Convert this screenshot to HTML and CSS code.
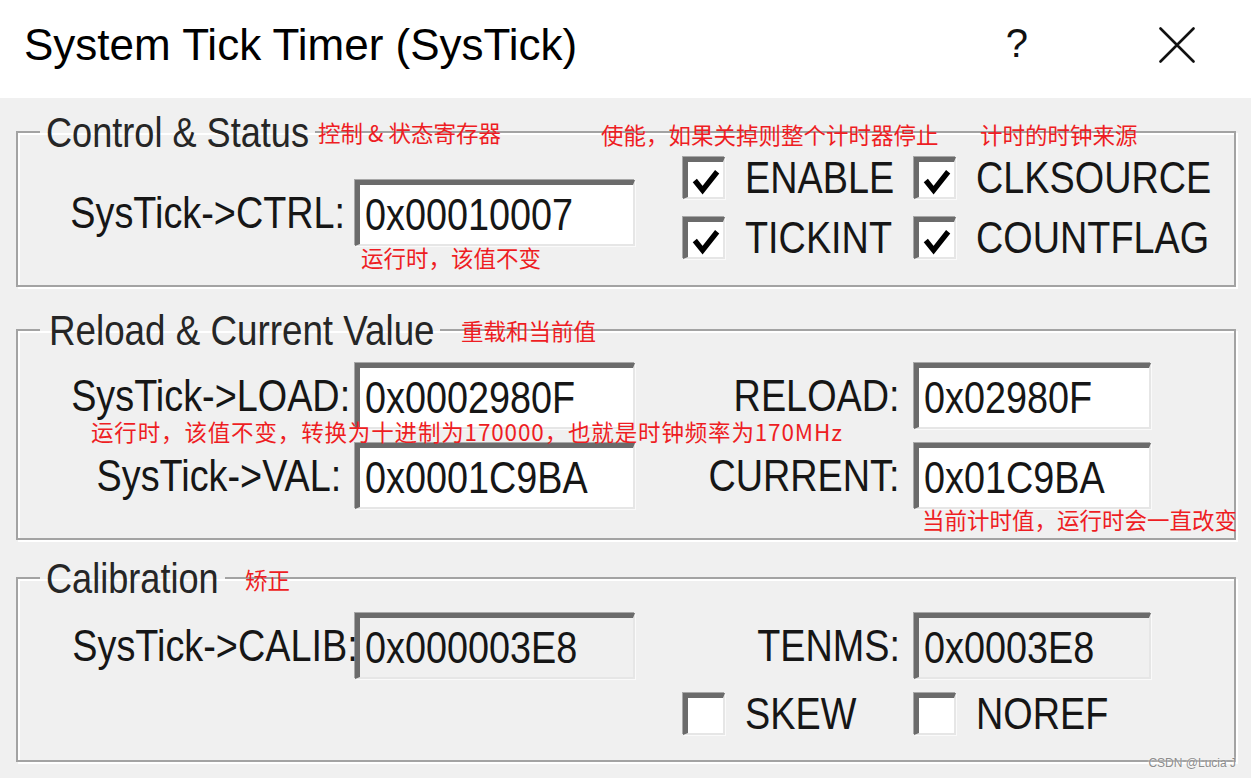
FILE: index.html
```html
<!DOCTYPE html>
<html lang="en">
<head>
<meta charset="utf-8">
<title>System Tick Timer (SysTick)</title>
<link rel="stylesheet" href="styles.css">
</head>
<body>
<div class="dialog">
  <header class="titlebar">
    <h1 class="title">System Tick Timer (SysTick)</h1>
    <div class="title-buttons">
      <span class="help">?</span>
      <svg class="close" width="36" height="36" viewBox="0 0 36 36"><path d="M1.5 1.5 L34.5 34.5 M34.5 1.5 L1.5 34.5"/></svg>
    </div>
  </header>

  <main class="content">
    <fieldset class="group g-ctrl">
      <legend><span class="nw lg-ctrl">Control &amp; Status</span></legend>
      <div class="ctrl-layout">
        <div class="field">
          <span class="lbl"><span class="nw r">SysTick-&gt;CTRL:</span></span>
          <div class="edit"><span class="nw">0x00010007</span></div>
        </div>
        <div class="checks">
          <div class="chk"><span class="box"><svg viewBox="0 0 36 36"><path d="M7 19 L15 29 L30 10"/></svg></span><span class="chk-lbl"><span class="nw">ENABLE</span></span></div>
          <div class="chk"><span class="box"><svg viewBox="0 0 36 36"><path d="M7 19 L15 29 L30 10"/></svg></span><span class="chk-lbl"><span class="nw">CLKSOURCE</span></span></div>
          <div class="chk"><span class="box"><svg viewBox="0 0 36 36"><path d="M7 19 L15 29 L30 10"/></svg></span><span class="chk-lbl"><span class="nw">TICKINT</span></span></div>
          <div class="chk"><span class="box"><svg viewBox="0 0 36 36"><path d="M7 19 L15 29 L30 10"/></svg></span><span class="chk-lbl"><span class="nw">COUNTFLAG</span></span></div>
        </div>
      </div>
    </fieldset>

    <fieldset class="group g-reload">
      <legend><span class="nw lg-reload">Reload &amp; Current Value</span></legend>
      <div class="rows">
        <div class="row">
          <span class="lbl"><span class="nw r">SysTick-&gt;LOAD:</span></span>
          <div class="edit"><span class="nw">0x0002980F</span></div>
          <span class="lbl lbl-r"><span class="nw r">RELOAD:</span></span>
          <div class="edit edit-s"><span class="nw">0x02980F</span></div>
        </div>
        <div class="row">
          <span class="lbl"><span class="nw r">SysTick-&gt;VAL:</span></span>
          <div class="edit"><span class="nw">0x0001C9BA</span></div>
          <span class="lbl lbl-r"><span class="nw r">CURRENT:</span></span>
          <div class="edit edit-s"><span class="nw">0x01C9BA</span></div>
        </div>
      </div>
    </fieldset>

    <fieldset class="group g-calib">
      <legend><span class="nw lg-calib">Calibration</span></legend>
      <div class="rows calib-rows">
        <div class="row">
          <span class="lbl"><span class="nw r">SysTick-&gt;CALIB:</span></span>
          <div class="edit disabled"><span class="nw">0x000003E8</span></div>
          <span class="lbl lbl-r"><span class="nw r">TENMS:</span></span>
          <div class="edit edit-s disabled"><span class="nw">0x0003E8</span></div>
        </div>
        <div class="checks calib-checks">
          <div class="chk"><span class="box"></span><span class="chk-lbl"><span class="nw">SKEW</span></span></div>
          <div class="chk"><span class="box"></span><span class="chk-lbl"><span class="nw">NOREF</span></span></div>
        </div>
      </div>
    </fieldset>
  </main>

  <span class="note n1">控制 &amp; 状态寄存器</span>
  <span class="note n2">使能，如果关掉则整个计时器停止</span>
  <span class="note n3">计时的时钟来源</span>
  <span class="note n4">运行时，该值不变</span>
  <span class="note n5">重载和当前值</span>
  <span class="note n6">运行时，该值不变，转换为十进制为170000，也就是时钟频率为170MHz</span>
  <span class="note n7">当前计时值，运行时会一直改变</span>
  <span class="note n8">矫正</span>

  <div class="watermark">CSDN @Lucia J</div>
</div>
</body>
</html>
```

FILE: styles.css
```css
html, body {
  margin: 0;
  padding: 0;
}
body {
  background: #f0f0f0;
  font-family: "Liberation Sans", Arial, sans-serif;
  color: #161616;
}
.dialog {
  position: relative;
  width: 1251px;
  height: 778px;
  overflow: hidden;
}

/* narrow (condensed) rendering of the dialog's bitmap font */
.nw {
  display: inline-block;
  transform: scaleX(0.84);
  transform-origin: left center;
  white-space: nowrap;
}
.nw.r {
  transform-origin: right center;
}

/* title bar */
.titlebar {
  height: 98px;
  background: #fff;
  display: flex;
  align-items: flex-start;
}
.title {
  flex: 1;
  margin: 0;
  padding: 20px 0 0 24px;
  font: 400 44px/50px "Liberation Sans", Arial, sans-serif;
  color: #000;
}
.title-buttons {
  display: flex;
  align-items: flex-start;
  padding-right: 56px;
}
.help {
  padding-top: 18px;
  font: 400 40px/50px "Liberation Sans", Arial, sans-serif;
  color: #111;
  margin-right: 131px;
}
.close {
  margin-top: 27px;
}
.close path {
  stroke: #111;
  stroke-width: 2.6;
  stroke-linecap: round;
  fill: none;
}

/* groups */
.group {
  margin: 0 15px 0 16px;
  padding: 0;
  min-width: 0;
  border: 2px solid #a3a3a3;
  box-shadow: inset 2px 2px 0 #fff, 2px 2px 0 #fff;
}
.group legend {
  margin-left: 22px;
  padding: 0 6px;
  font-size: 43px;
  line-height: 48px;
  color: #262626;
}
.lg-ctrl { margin-right: -50px; }
.lg-reload {
  transform: scaleX(0.855);
  margin-right: -66px;
  margin-left: 3px;
}
.lg-calib { margin-right: -33px; }

.g-ctrl { margin-top: 10px; }
.g-reload { margin-top: 19px; }
.g-calib { margin-top: 14px; }

.lbl {
  width: 323px;
  flex: none;
  text-align: right;
  font-size: 45px;
  line-height: 52px;
  white-space: nowrap;
}
.lbl-r {
  width: 265px;
}

.edit {
  box-sizing: border-box;
  flex: none;
  width: 280px;
  height: 66px;
  margin-left: 14px;
  padding-left: 5px;
  display: flex;
  align-items: center;
  background: #fff;
  border-style: solid;
  border-width: 5px 2px 2px 5px;
  border-color: #6b6b6b #e6e6e6 #e6e6e6 #6b6b6b;
  box-shadow: -1px -1px 0 #a8a8a8, 1px 1px 0 #fafafa;
  font-size: 45px;
  white-space: nowrap;
}
.edit-s {
  width: 237px;
}
.edit.disabled {
  background: #f0f0f0;
}

/* control group */
.ctrl-layout {
  display: flex;
  align-items: flex-start;
  padding-bottom: 25px;
}
.field {
  display: flex;
  align-items: center;
  margin-top: 24px;
}
.checks {
  display: grid;
  grid-template-columns: 231px auto;
  row-gap: 16px;
  margin-left: 48px;
}
.chk {
  display: flex;
  align-items: center;
  height: 44px;
}
.box {
  box-sizing: border-box;
  width: 42px;
  height: 42px;
  flex: none;
  background: #fff;
  border-style: solid;
  border-width: 5px 2px 2px 5px;
  border-color: #6b6b6b #e6e6e6 #e6e6e6 #6b6b6b;
  box-shadow: -1px -1px 0 #a8a8a8, 1px 1px 0 #fafafa;
}
.box svg {
  display: block;
  width: 35px;
  height: 35px;
}
.box path {
  fill: none;
  stroke: #000;
  stroke-width: 5.5;
  stroke-linejoin: miter;
}
.chk-lbl {
  margin-left: 20px;
  font-size: 45px;
  line-height: 44px;
  white-space: nowrap;
}

/* reload & calibration groups */
.rows {
  display: flex;
  flex-direction: column;
  gap: 14px;
  padding: 9px 0 29px;
}
.row {
  display: flex;
  align-items: center;
}
.calib-rows {
  padding: 11px 0 25px;
}
.calib-checks {
  margin-left: 665px;
}
.calib-checks .chk {
  height: 42px;
}

/* red annotations laid over the screenshot */
.note {
  position: absolute;
  color: #ee1d23;
  font: 400 22.5px/1 "Noto Sans CJK SC", "Noto Sans", sans-serif;
  white-space: nowrap;
}
.n1 { left: 318px; top: 121px; }
.n2 { left: 601px; top: 123px; }
.n3 { left: 980px; top: 123px; }
.n4 { left: 361px; top: 246px; }
.n5 { left: 461px; top: 319px; }
.n6 { left: 91px; top: 420px; letter-spacing: 0.85px; }
.n7 { left: 922px; top: 508px; }
.n8 { left: 245px; top: 568px; }

.watermark {
  position: absolute;
  right: 15px;
  top: 756px;
  font: 400 12px/14px "Liberation Sans", Arial, sans-serif;
  color: #8c8c8c;
  text-shadow: 0 0 2px #fff;
}
```
